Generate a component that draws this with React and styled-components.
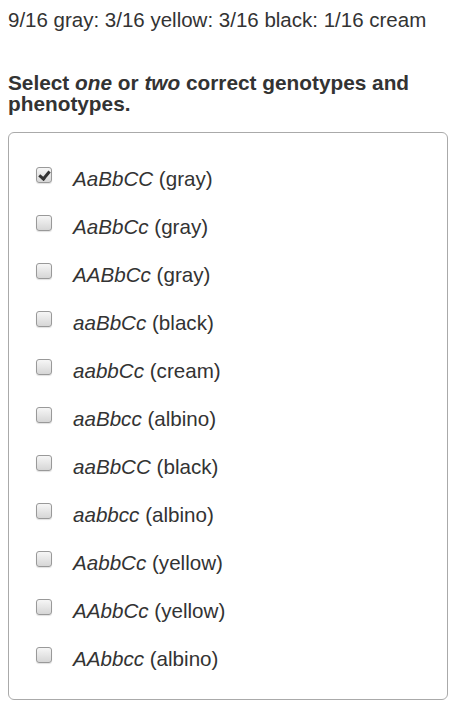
import { useState } from "react";
import styled, { createGlobalStyle } from "styled-components";

const GlobalStyle = createGlobalStyle`
  body {
    margin: 0;
    padding: 0 8px;
    background: #fff;
    font-family: "Liberation Sans", Arial, Helvetica, sans-serif;
    color: #333;
  }
`;

const options = [
  { geno: "AaBbCC", pheno: "gray", checked: true },
  { geno: "AaBbCc", pheno: "gray" },
  { geno: "AABbCc", pheno: "gray" },
  { geno: "aaBbCc", pheno: "black" },
  { geno: "aabbCc", pheno: "cream" },
  { geno: "aaBbcc", pheno: "albino" },
  { geno: "aaBbCC", pheno: "black" },
  { geno: "aabbcc", pheno: "albino" },
  { geno: "AabbCc", pheno: "yellow" },
  { geno: "AAbbCc", pheno: "yellow" },
  { geno: "AAbbcc", pheno: "albino" },
];

function App() {
  const [checked, setChecked] = useState(
    options.map((o) => !!o.checked)
  );

  const toggle = (i) => {
    setChecked((prev) => prev.map((c, j) => (j === i ? !c : c)));
  };

  return (
    <Page>
      <GlobalStyle />
      <Ratio>9/16 gray: 3/16 yellow: 3/16 black: 1/16 cream</Ratio>
      <Prompt>
        Select <em>one</em> or <em>two</em> correct genotypes and phenotypes.
      </Prompt>
      <OptionBox>
        {options.map((o, i) => (
          <Option key={o.geno + i}>
            <Box
              type="checkbox"
              checked={checked[i]}
              onChange={() => toggle(i)}
            />
            <Label>
              <em>{o.geno}</em> ({o.pheno})
            </Label>
          </Option>
        ))}
      </OptionBox>
    </Page>
  );
}

const Page = styled.div`
  display: flex;
  flex-direction: column;
`;

const Ratio = styled.p`
  margin: 8px 0 0;
  font-size: 20.5px;
  line-height: 23px;
`;

const Prompt = styled.h3`
  margin: 41px 0 0;
  font-size: 20.8px;
  line-height: 21px;
  font-weight: 700;
  em {
    font-style: italic;
  }
`;

const OptionBox = styled.div`
  margin-top: 18px;
  width: 440px;
  box-sizing: border-box;
  border: 1px solid #aaa;
  border-radius: 6px;
  padding: 22px 0 16px 26px;
  display: flex;
  flex-direction: column;
`;

const Option = styled.label`
  display: flex;
  align-items: center;
  height: 48px;
`;

const Box = styled.input`
  appearance: none;
  -webkit-appearance: none;
  margin: 0 0 8px 1px;
  width: 16px;
  height: 16px;
  box-sizing: border-box;
  border: 1px solid #999;
  border-radius: 3px;
  background: linear-gradient(#f6f6f6, #d6d6d6);
  box-shadow: 0 1px 1px rgba(0, 0, 0, 0.12);
  position: relative;
  flex-shrink: 0;
  &:checked::after {
    content: "";
    position: absolute;
    left: 4px;
    top: 1px;
    width: 4px;
    height: 8px;
    border: solid #333;
    border-width: 0 3px 3px 0;
    transform: rotate(40deg);
  }
`;

const Label = styled.span`
  margin-left: 21px;
  font-size: 20.6px;
  line-height: 48px;
  color: #333;
  em {
    font-style: italic;
  }
`;

export default App;
